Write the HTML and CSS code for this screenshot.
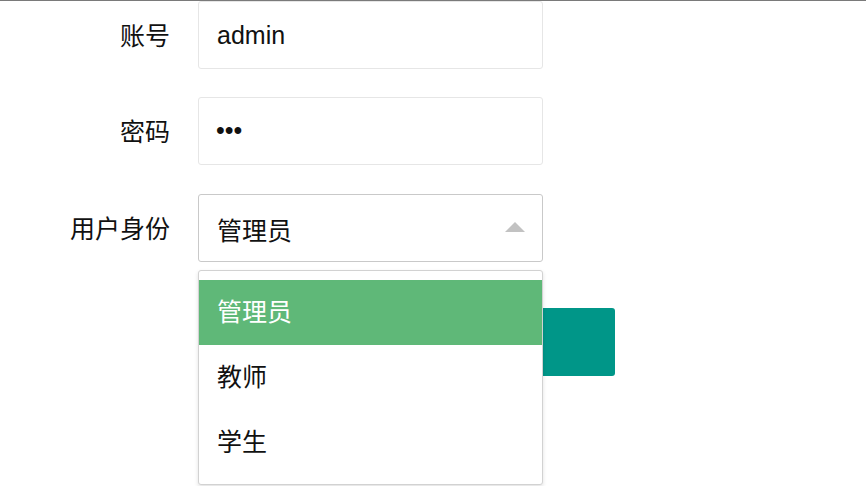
FILE: index.html
```html
<!DOCTYPE html>
<html lang="zh-CN">
<head>
<meta charset="utf-8">
<title>登录</title>
<link rel="stylesheet" href="styles.css">
</head>
<body>
<form class="form">
  <div class="row">
    <label class="label">账号</label>
    <div class="field">
      <input class="input" type="text" value="admin">
    </div>
  </div>
  <div class="row">
    <label class="label">密码</label>
    <div class="field">
      <div class="input dots">•••</div>
    </div>
  </div>
  <div class="row row-select">
    <label class="label">用户身份</label>
    <div class="field select">
      <div class="input select-title">管理员<span class="edge"></span></div>
      <dl class="options">
        <dd class="option selected">管理员</dd>
        <dd class="option">教师</dd>
        <dd class="option">学生</dd>
      </dl>
    </div>
  </div>
  <div class="row btn-row">
    <div class="field">
      <button class="btn" type="button">登录</button>
    </div>
  </div>
</form>
</body>
</html>
```
FILE: styles.css
```css
html, body {
  margin: 0;
  padding: 0;
  background: #fff;
}
body {
  border-top: 1px solid #7a7a7a;
  font-family: "Liberation Sans", "Noto Sans CJK SC", sans-serif;
  font-size: 25px;
  color: #111;
  overflow: hidden;
  height: 485px;
}
.form {
  margin: 0;
  display: flex;
  flex-direction: column;
  gap: 28px;
}
.row {
  display: flex;
  align-items: center;
}
.row-select {
  margin-top: 1px;
}
.label {
  width: 198px;
  height: 68px;
  box-sizing: border-box;
  padding: 2px 28px 0 0;
  text-align: right;
  line-height: 66px;
}
.field {
  width: 345px;
}
.input {
  display: flex;
  align-items: center;
  width: 100%;
  height: 68px;
  box-sizing: border-box;
  border: 1px solid #e6e6e6;
  border-radius: 3px;
  padding: 1px 0 0 18px;
  font: inherit;
  color: inherit;
  background: #fff;
  outline: none;
}
.dots {
  font-size: 25px;
  padding-left: 17px;
  padding-bottom: 2px;
}
.select {
  position: relative;
}
.select-title {
  border-color: #c9c9c9;
  position: relative;
}
.edge {
  position: absolute;
  right: 17px;
  top: 27px;
  width: 0;
  height: 0;
  border-left: 10px solid transparent;
  border-right: 10px solid transparent;
  border-bottom: 10px solid #c2c2c2;
}
.options {
  position: absolute;
  left: 0;
  top: 76px;
  width: 345px;
  box-sizing: border-box;
  margin: 0;
  padding: 9px 0;
  border: 1px solid #d2d2d2;
  border-radius: 3px;
  background: #fff;
  box-shadow: 0 2px 4px rgba(0, 0, 0, 0.12);
  z-index: 10;
}
.option {
  margin: 0;
  height: 65px;
  line-height: 65px;
  padding-left: 18px;
  color: #111;
}
.option.selected {
  background: #5fb878;
  color: #fff;
}
.btn-row {
  margin-top: 18px;
  padding-left: 198px;
}
.btn-row .field {
  width: 417px;
}
.btn {
  width: 100%;
  height: 68px;
  border: none;
  border-radius: 3px;
  background: #009688;
  color: #fff;
  font: inherit;
}
```
